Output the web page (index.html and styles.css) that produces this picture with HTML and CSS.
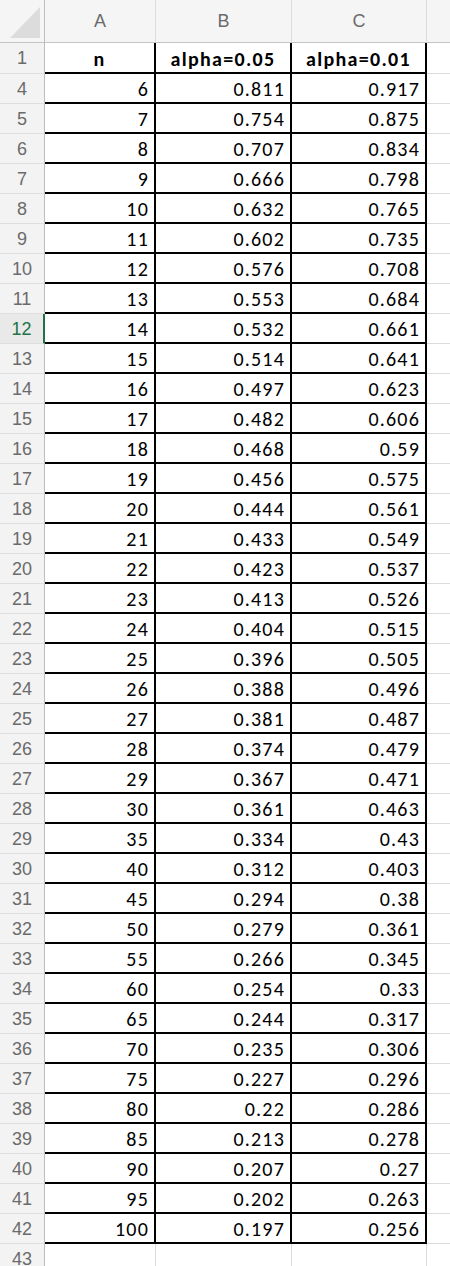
FILE: index.html
```html
<!DOCTYPE html>
<html>
<head>
<meta charset="utf-8">
<link rel="stylesheet" href="styles.css">
</head>
<body>
<div class="sheet">
  <div class="row hdr">
    <div class="corner"><span class="tri"></span></div>
    <div class="ch">A</div>
    <div class="ch">B</div>
    <div class="ch">C</div>
    <div class="ch chd"></div>
  </div>
  <div class="row r1">
    <div class="rh">1</div>
    <div class="c th">n</div>
    <div class="c th">alpha=0.05</div>
    <div class="c th">alpha=0.01</div>
    <div class="d"></div>
  </div>
  <div class="row"><div class="rh">4</div><div class="c">6</div><div class="c">0.811</div><div class="c">0.917</div><div class="d"></div></div>
  <div class="row"><div class="rh">5</div><div class="c">7</div><div class="c">0.754</div><div class="c">0.875</div><div class="d"></div></div>
  <div class="row"><div class="rh">6</div><div class="c">8</div><div class="c">0.707</div><div class="c">0.834</div><div class="d"></div></div>
  <div class="row"><div class="rh">7</div><div class="c">9</div><div class="c">0.666</div><div class="c">0.798</div><div class="d"></div></div>
  <div class="row"><div class="rh">8</div><div class="c">10</div><div class="c">0.632</div><div class="c">0.765</div><div class="d"></div></div>
  <div class="row"><div class="rh">9</div><div class="c">11</div><div class="c">0.602</div><div class="c">0.735</div><div class="d"></div></div>
  <div class="row"><div class="rh">10</div><div class="c">12</div><div class="c">0.576</div><div class="c">0.708</div><div class="d"></div></div>
  <div class="row"><div class="rh">11</div><div class="c">13</div><div class="c">0.553</div><div class="c">0.684</div><div class="d"></div></div>
  <div class="row sel"><div class="rh">12</div><div class="c">14</div><div class="c">0.532</div><div class="c">0.661</div><div class="d"></div></div>
  <div class="row"><div class="rh">13</div><div class="c">15</div><div class="c">0.514</div><div class="c">0.641</div><div class="d"></div></div>
  <div class="row"><div class="rh">14</div><div class="c">16</div><div class="c">0.497</div><div class="c">0.623</div><div class="d"></div></div>
  <div class="row"><div class="rh">15</div><div class="c">17</div><div class="c">0.482</div><div class="c">0.606</div><div class="d"></div></div>
  <div class="row"><div class="rh">16</div><div class="c">18</div><div class="c">0.468</div><div class="c">0.59</div><div class="d"></div></div>
  <div class="row"><div class="rh">17</div><div class="c">19</div><div class="c">0.456</div><div class="c">0.575</div><div class="d"></div></div>
  <div class="row"><div class="rh">18</div><div class="c">20</div><div class="c">0.444</div><div class="c">0.561</div><div class="d"></div></div>
  <div class="row"><div class="rh">19</div><div class="c">21</div><div class="c">0.433</div><div class="c">0.549</div><div class="d"></div></div>
  <div class="row"><div class="rh">20</div><div class="c">22</div><div class="c">0.423</div><div class="c">0.537</div><div class="d"></div></div>
  <div class="row"><div class="rh">21</div><div class="c">23</div><div class="c">0.413</div><div class="c">0.526</div><div class="d"></div></div>
  <div class="row"><div class="rh">22</div><div class="c">24</div><div class="c">0.404</div><div class="c">0.515</div><div class="d"></div></div>
  <div class="row"><div class="rh">23</div><div class="c">25</div><div class="c">0.396</div><div class="c">0.505</div><div class="d"></div></div>
  <div class="row"><div class="rh">24</div><div class="c">26</div><div class="c">0.388</div><div class="c">0.496</div><div class="d"></div></div>
  <div class="row"><div class="rh">25</div><div class="c">27</div><div class="c">0.381</div><div class="c">0.487</div><div class="d"></div></div>
  <div class="row"><div class="rh">26</div><div class="c">28</div><div class="c">0.374</div><div class="c">0.479</div><div class="d"></div></div>
  <div class="row"><div class="rh">27</div><div class="c">29</div><div class="c">0.367</div><div class="c">0.471</div><div class="d"></div></div>
  <div class="row"><div class="rh">28</div><div class="c">30</div><div class="c">0.361</div><div class="c">0.463</div><div class="d"></div></div>
  <div class="row"><div class="rh">29</div><div class="c">35</div><div class="c">0.334</div><div class="c">0.43</div><div class="d"></div></div>
  <div class="row"><div class="rh">30</div><div class="c">40</div><div class="c">0.312</div><div class="c">0.403</div><div class="d"></div></div>
  <div class="row"><div class="rh">31</div><div class="c">45</div><div class="c">0.294</div><div class="c">0.38</div><div class="d"></div></div>
  <div class="row"><div class="rh">32</div><div class="c">50</div><div class="c">0.279</div><div class="c">0.361</div><div class="d"></div></div>
  <div class="row"><div class="rh">33</div><div class="c">55</div><div class="c">0.266</div><div class="c">0.345</div><div class="d"></div></div>
  <div class="row"><div class="rh">34</div><div class="c">60</div><div class="c">0.254</div><div class="c">0.33</div><div class="d"></div></div>
  <div class="row"><div class="rh">35</div><div class="c">65</div><div class="c">0.244</div><div class="c">0.317</div><div class="d"></div></div>
  <div class="row"><div class="rh">36</div><div class="c">70</div><div class="c">0.235</div><div class="c">0.306</div><div class="d"></div></div>
  <div class="row"><div class="rh">37</div><div class="c">75</div><div class="c">0.227</div><div class="c">0.296</div><div class="d"></div></div>
  <div class="row"><div class="rh">38</div><div class="c">80</div><div class="c">0.22</div><div class="c">0.286</div><div class="d"></div></div>
  <div class="row"><div class="rh">39</div><div class="c">85</div><div class="c">0.213</div><div class="c">0.278</div><div class="d"></div></div>
  <div class="row"><div class="rh">40</div><div class="c">90</div><div class="c">0.207</div><div class="c">0.27</div><div class="d"></div></div>
  <div class="row"><div class="rh">41</div><div class="c">95</div><div class="c">0.202</div><div class="c">0.263</div><div class="d"></div></div>
  <div class="row"><div class="rh">42</div><div class="c">100</div><div class="c">0.197</div><div class="c">0.256</div><div class="d"></div></div>
  <div class="row empty"><div class="rh">43</div><div class="e"></div><div class="e"></div><div class="e"></div><div class="d"></div></div>
</div>
</body>
</html>
```

FILE: styles.css
```css
html, body {
  margin: 0;
  padding: 0;
  background: #ffffff;
}

.sheet {
  width: 450px;
  overflow: hidden;
  font-family: "Carlito", "Open Sans", "Liberation Sans", sans-serif;
}

.row {
  display: grid;
  grid-template-columns: 45px 111px 136px 135px 1fr;
  height: 30px;
  box-sizing: border-box;
}

.row > div {
  box-sizing: border-box;
  min-width: 0;
}

.hdr {
  height: 43px;
}

.r1 {
  height: 31px;
}

.corner {
  background: #f5f5f5;
  border-right: 1px solid #bdbdbd;
  border-bottom: 1px solid #c4c4c4;
  padding: 7px 0 0 10px;
}

.tri {
  display: block;
  width: 30px;
  height: 31px;
  background: #dcdcdc;
  clip-path: polygon(100% 0, 100% 100%, 0 100%);
}

.ch {
  background: #f5f5f5;
  border-right: 1px solid #dcdcdc;
  border-bottom: 1px solid #c4c4c4;
  display: flex;
  align-items: center;
  justify-content: center;
  font-family: "Liberation Sans", Arial, sans-serif;
  font-size: 18px;
  color: #6b6b6b;
  padding-top: 1px;
}

.chd {
  border-right: none;
}

.rh {
  background: #f3f3f3;
  border-right: 1px solid #bdbdbd;
  border-bottom: 1px solid #dedede;
  display: flex;
  align-items: center;
  justify-content: center;
  font-family: "Liberation Sans", Arial, sans-serif;
  font-size: 18px;
  color: #6b6b6b;
  padding-top: 1px;
}

.sel .rh {
  background: #e9e9e9;
  color: #217346;
  border-right: 2px solid #217346;
}

.c {
  border-right: 2px solid #000000;
  border-bottom: 2px solid #000000;
  display: flex;
  align-items: flex-end;
  justify-content: flex-end;
  padding: 0 5px 2px 0;
  font-size: 20px;
  line-height: 22px;
  letter-spacing: 1.2px;
  color: #000000;
  white-space: nowrap;
}

.th {
  justify-content: center;
  font-weight: 700;
  padding: 0 0 2px 0;
  letter-spacing: 1.3px;
}

.d {
  border-bottom: 1px solid #dcdcdc;
}

.e {
  border-right: 1px solid #dcdcdc;
}
```
